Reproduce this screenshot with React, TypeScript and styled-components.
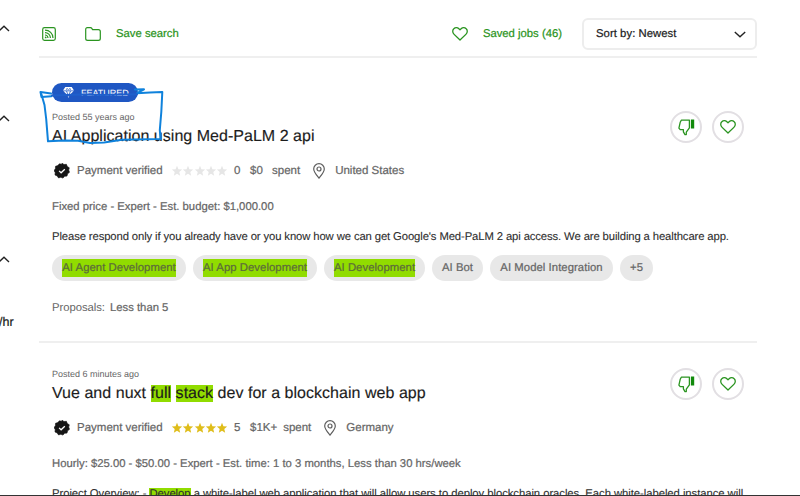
import React from "react"
import styled, { createGlobalStyle, css } from "styled-components"

const GREEN = "#2a9420"

type Piece = string | { mark: string }

interface Job {
	featured?: boolean
	posted: string
	title: Piece[]
	rating: number
	spent: string
	country: string
	terms: string
	description: Piece[]
	tracking: number
	tags?: { label: string; marked?: boolean; width: number }[]
	proposals?: string
}

const jobs: Job[] = [
	{
		featured: true,
		posted: "Posted 55 years ago",
		title: ["AI Application using Med-PaLM 2 api"],
		rating: 0,
		spent: "$0",
		country: "United States",
		terms: "Fixed price - Expert - Est. budget: $1,000.00",
		description: [
			"Please respond only if you already have or you know how we can get Google's Med-PaLM 2 api access. We are building a healthcare app.",
		],
		tracking: -0.12,
		tags: [
			{ label: "AI Agent Development", marked: true, width: 134 },
			{ label: "AI App Development", marked: true, width: 124 },
			{ label: "AI Development", marked: true, width: 101 },
			{ label: "AI Bot", width: 51 },
			{ label: "AI Model Integration", width: 123 },
			{ label: "+5", width: 33 },
		],
		proposals: "Less than 5",
	},
	{
		posted: "Posted 6 minutes ago",
		title: [
			"Vue and nuxt ",
			{ mark: "full" },
			" ",
			{ mark: "stack" },
			" dev for a blockchain web app",
		],
		rating: 5,
		spent: "$1K+",
		country: "Germany",
		terms: "Hourly: $25.00 - $50.00 - Expert - Est. time: 1 to 3 months, Less than 30 hrs/week",
		description: [
			"Project Overview: - ",
			{ mark: "Develop" },
			" a white-label web application that will allow users to deploy blockchain oracles. Each white-labeled instance will",
		],
		tracking: -0.055,
	},
]

// Icons
const HeartIcon = () => (
	<svg width="16" height="14" viewBox="0 0 16 14" fill="none" stroke={GREEN} strokeWidth="1.3">
		<path
			d="M8 13 1.9 7.1C.3 5.5.4 3.1 1.8 1.8 3.2.4 5.5.4 6.9 1.8L8 2.9l1.1-1.1c1.4-1.4 3.7-1.4 5.1 0 1.4 1.3 1.5 3.7-.1 5.3Z"
			strokeLinejoin="round"
		/>
	</svg>
)

const RssIcon = () => (
	<svg width="14" height="14" viewBox="0 0 14 14" fill="none" stroke={GREEN} strokeWidth="1.2">
		<rect x=".7" y=".7" width="12.6" height="12.6" rx="1.8" />
		<path d="M3 3.1c4.4 0 8 3.5 8 7.9M3 5.6c3 0 5.4 2.4 5.4 5.4M3 8c1.7 0 3 1.3 3 3" />
		<circle cx="3.7" cy="10.4" r=".9" fill={GREEN} stroke="none" />
	</svg>
)

const FolderIcon = () => (
	<svg width="16" height="14" viewBox="0 0 16 14" fill="none" stroke={GREEN} strokeWidth="1.2">
		<path
			d="M.7 2.4C.7 1.3 1.3.7 2.3.7h3.2c.6 0 1 .2 1.3.7l.8 1.3h5.8c1.2 0 1.9.7 1.9 1.9v6.8c0 1.2-.7 1.9-1.9 1.9H2.6c-1.2 0-1.9-.7-1.9-1.9Z"
			strokeLinejoin="round"
		/>
	</svg>
)

const Chevron = ({ up }: { up?: boolean }) => (
	<svg width="12" height="7" viewBox="0 0 12 7" fill="none" stroke="#222" strokeWidth="1.4">
		<path d={up ? "M1 6 6 1.3 11 6" : "M.8 1 6 5.7 11.2 1"} />
	</svg>
)

const ThumbDownIcon = () => (
	<svg width="17" height="17" viewBox="0 0 17 17" fill="none" stroke={GREEN} strokeWidth="1.3">
		<path
			d="M11.4 1.2H3.3L2.2 3.3.9 9.1l1.3 1.6h3.2v2.2l1.6 2.7h1.3v-2.4l3.1-4.400Z"
			strokeLinejoin="round"
		/>
		<path d="M12.9.5h3.3v9h-3.3Z" fill="#118a0b" stroke="none" />
	</svg>
)

const VerifiedIcon = () => (
	<svg width="16" height="16" viewBox="0 0 16 16">
		<path
			d="m8 .2 2 1.3 2.4-.2.9 2.2 2 1.3-.6 2.3.8 2.2-1.9 1.5-.6 2.3-2.4.2L9 15.1l-2.2-.8-2.3.6-1.3-2-2.2-.9.2-2.4L0 7.6l1.4-1.9.1-2.4 2.3-.7L5.4.8l2.3.5Z"
			fill="#161616"
			stroke="#161616"
			strokeLinejoin="round"
			strokeWidth=".6"
		/>
		<path d="m5.1 7.9 2 1.9 3.7-3.6" fill="none" stroke="#fff" strokeWidth="1.3" />
	</svg>
)

const PinIcon = () => (
	<svg width="12" height="16" viewBox="0 0 12 16" fill="none" stroke="#5e5e5e" strokeWidth="1.2">
		<path d="M6 15.2C3.2 11.7.7 8.9.7 6A5.3 5.3 0 0 1 11.3 6c0 2.9-2.5 5.7-5.3 9.2Z" />
		<circle cx="6" cy="6" r="2" />
	</svg>
)

const StarIcon = ({ filled }: { filled: boolean }) => (
	<svg width="12" height="12" viewBox="0 0 11 11">
		<path
			d="m5.5.6 1.3 3.2 3.4.3-2.6 2.3.8 3.400-2.900-1.800-2.900 1.800.8-3.400L.8 4.100l3.400-.3Z"
			fill={filled ? "#dfbd1a" : "#e6e6e6"}
		/>
	</svg>
)

const GemIcon = () => (
	<svg width="11" height="11" viewBox="0 0 11 11">
		<path
			d="M2.3 0h6.4L11 3.4H0ZM.5 4.2h2.7l1.5 4Zm3.6 0h2.8L5.5 9Zm3.7 0h2.7L6.3 8.2ZM4.7 9.5h1.6l-.8 1.3Z"
			fill="#fff"
		/>
		<path d="m3.1 3.2 1-2 1.4 2 1.4-2 1 2" fill="none" stroke="#1f57c3" strokeWidth=".6" />
	</svg>
)

// Hand drawn outline running across the badge and the title
const Scribble = () => (
	<ScribbleSvg width="128" height="58" viewBox="0 0 128 58">
		<path d="M12 5.500 1.500 4l1 5 10-.8" />
		<path d="M2.200 5.500 5.500 17l1.700 14L9 53.300l16-.8 14 .3 12 2.200 14-.5 18-2.800 38.500-.7-.7-9 1.500-18 1-20-12.300.5-13 .7 7-3.900-9 .2" />
		<path d="M13 7.500 40 6.500l24 .5 34-.8" stroke="#1f5fcb" />
	</ScribbleSvg>
)

const renderPieces = (pieces: Piece[]) =>
	pieces.map((piece, i) =>
		typeof piece === "string" ? piece : <Mark key={i}>{piece.mark}</Mark>
	)

const JobCard = ({ job }: { job: Job }) => (
	<Card $featured={job.featured}>
		{job.featured && (
			<Badge>
				<GemIcon />
				<span>FEATURED</span>
			</Badge>
		)}
		<CardHead>
			<div>
				<Posted>{job.posted}</Posted>
				<Title>{renderPieces(job.title)}</Title>
			</div>
			<Actions>
				<RoundButton aria-label="Not interested">
					<ThumbDownIcon />
				</RoundButton>
				<RoundButton aria-label="Save job">
					<HeartIcon />
				</RoundButton>
			</Actions>
		</CardHead>
		<Client>
			<VerifiedIcon />
			<Verified>Payment verified</Verified>
			<Stars>
				{[1, 2, 3, 4, 5].map((n) => (
					<StarIcon key={n} filled={n <= job.rating} />
				))}
			</Stars>
			<Rating>{job.rating}</Rating>
			<Spent>
				<span>{job.spent}</span>
				<span>spent</span>
			</Spent>
			<PinIcon />
			<Country>{job.country}</Country>
		</Client>
		<Terms>{job.terms}</Terms>
		<Description $tracking={job.tracking}>{renderPieces(job.description)}</Description>
		{job.tags && (
			<Tags>
				{job.tags.map((tag) => (
					<Tag key={tag.label} $width={tag.width}>
						{tag.marked ? <Mark $muted>{tag.label}</Mark> : tag.label}
					</Tag>
				))}
			</Tags>
		)}
		{job.proposals && (
			<Proposals>
				Proposals: <strong>{job.proposals}</strong>
			</Proposals>
		)}
		{job.featured && <Scribble />}
	</Card>
)

const App = () => (
	<>
		<GlobalStyle />
		<Page>
			<Sidebar>
				<Chevron up />
				<Chevron up />
				<Chevron up />
				<Rate>/hr</Rate>
			</Sidebar>
			<Main>
				<Toolbar>
					<RssIcon />
					<SaveSearch>
						<FolderIcon />
						Save search
					</SaveSearch>
					<SavedJobs>
						<HeartIcon />
						Saved jobs (46)
					</SavedJobs>
					<Sort>
						Sort by: Newest
						<Chevron />
					</Sort>
				</Toolbar>
				{jobs.map((job) => (
					<JobCard key={job.posted} job={job} />
				))}
			</Main>
		</Page>
	</>
)

export default App

const GlobalStyle = createGlobalStyle`
	* {
		box-sizing: border-box;
	}

	body {
		margin: 0;
		overflow: hidden;
		background: #fff;
		color: #1c1c1c;
		font-family: "Liberation Sans", Arial, sans-serif;
		text-rendering: geometricPrecision;
	}

	svg {
		display: block;
		flex-shrink: 0;
	}
`

// Liberation Sans has no 500 weight, a thin stroke stands in for it
const medium = css`
	-webkit-text-stroke: 0.22px currentColor;
`

const Page = styled.div`
	display: flex;
	width: 800px;
	height: 496px;
	overflow: hidden;
	border-bottom: 1px solid #333;
`

const Sidebar = styled.aside`
	width: 39px;
	flex-shrink: 0;
	padding-top: 25px;

	svg {
		margin-left: -2px;
	}

	svg:nth-child(2) {
		margin-top: 83px;
	}

	svg:nth-child(3) {
		margin-top: 134px;
	}
`

const Rate = styled.div`
	${medium}
	margin: 50px 0 0 -1px;
	font-size: 12.5px;
	line-height: 18px;
`

const Main = styled.main`
	width: 718px;
	flex-shrink: 0;
`

const Toolbar = styled.header`
	${medium}
	display: flex;
	align-items: center;
	height: 58px;
	padding: 12px 0 0 3px;
	border-bottom: 2px solid #efefef;
	font-size: 11.3px;
`

const SaveSearch = styled.div`
	display: flex;
	align-items: center;
	gap: 15px;
	margin-left: 29px;
	color: ${GREEN};
	white-space: nowrap;
`

const SavedJobs = styled(SaveSearch)`
	margin-left: auto;
	margin-right: 20px;
`

const Sort = styled.div`
	display: flex;
	align-items: center;
	justify-content: space-between;
	width: 175px;
	height: 32px;
	padding: 0 9px 0 12px;
	border: 2px solid #ededed;
	border-radius: 6px;
	letter-spacing: 0.05px;
`

const Card = styled.article<{ $featured?: boolean }>`
	position: relative;
	padding: ${({ $featured }) => ($featured ? "25px 0 0 13px" : "23px 0 0 13px")};
	height: ${({ $featured }) => ($featured ? "285px" : "auto")};
	border-bottom: 2px solid #efefef;
	white-space: nowrap;
	color: #666;
	font-size: 11.5px;
`

const Badge = styled.div`
	display: flex;
	align-items: center;
	gap: 7px;
	width: 86px;
	height: 19px;
	margin-bottom: 7px;
	padding-left: 11px;
	border-radius: 10px;
	background: #1f57c3;
	color: #fff;
	font-size: 9px;
`

const CardHead = styled.div`
	display: flex;
	justify-content: space-between;
	height: 37px;
`

const Posted = styled.div`
	font-size: 9px;
	line-height: 16px;
`

const Title = styled.h2`
	margin: 1px 0 0;
	color: #1c1c1c;
	font-size: 16px;
	font-weight: 400;
	line-height: 21px;
	letter-spacing: 0.03px;
	-webkit-text-stroke: 0.15px currentColor;
`

const Actions = styled.div`
	display: flex;
	gap: 10px;
	padding: 2px 13px 0 0;
`

const RoundButton = styled.button`
	display: flex;
	align-items: center;
	justify-content: center;
	width: 32px;
	height: 32px;
	padding: 0;
	border: 2px solid #e2dfe3;
	border-radius: 50%;
	background: #fff;
`

const Client = styled.div`
	${medium}
	display: flex;
	align-items: center;
	height: 18px;
	margin-top: 16px;
	padding-left: 2px;
`

const Verified = styled.span`
	width: 94px;
	margin-left: 7px;
`

const Stars = styled.div`
	display: flex;
	width: 56px;

	svg {
		margin-right: -0.7px;
	}
`

const Rating = styled.span`
	width: 10px;
	margin-left: 7px;
`

const Spent = styled.span`
	display: flex;
	gap: 6px;
	margin: 0 13px 0 6px;

	span:first-child {
		min-width: 16px;
	}
`

const Country = styled.span`
	margin-left: 10px;
`

const Terms = styled.div`
	${medium}
	margin-top: 18px;
	font-size: 11.3px;
	line-height: 18px;
`

const Description = styled.p<{ $tracking: number }>`
	margin: 12px 0 0;
	color: #2e2e2e;
	font-size: 11.3px;
	line-height: 18px;
	letter-spacing: ${({ $tracking }) => $tracking}px;
	-webkit-text-stroke: 0.1px currentColor;
`

const Tags = styled.div`
	display: flex;
	gap: 7px;
	margin-top: 9px;
`

const Tag = styled.span<{ $width: number }>`
	${medium}
	display: flex;
	align-items: center;
	justify-content: center;
	width: ${({ $width }) => $width}px;
	height: 26px;
	border-radius: 13px;
	background: #e8e8e8;
	font-size: 11.3px;
	letter-spacing: 0.06px;
`

const Mark = styled.mark<{ $muted?: boolean }>`
	padding: ${({ $muted }) => ($muted ? "3px 0" : "0")};
	background: #91dc00;
	color: ${({ $muted }) => ($muted ? "#5c6b3c" : "inherit")};
`

const Proposals = styled.div`
	margin-top: 18px;
	line-height: 18px;
	font-size: 11.3px;
	letter-spacing: -0.05px;

	strong {
		${medium}
		margin-left: 2px;
		font-weight: 400;
		letter-spacing: 0;
	}
`

const ScribbleSvg = styled.svg`
	position: absolute;
	top: 30px;
	left: 0;
	fill: none;
	stroke: #0f82dc;
	stroke-width: 2;
	stroke-linecap: round;
	stroke-linejoin: round;
`
